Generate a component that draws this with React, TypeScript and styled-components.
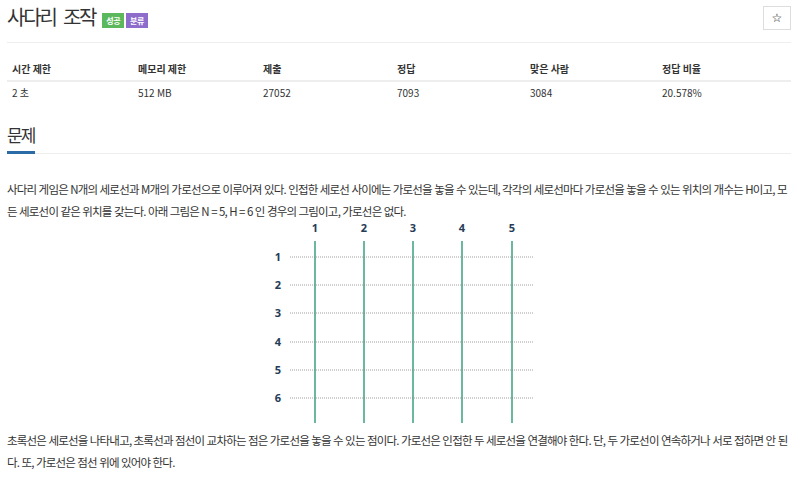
import React from 'react';
import styled, { createGlobalStyle } from 'styled-components';

const GlobalStyle = createGlobalStyle`
  body {
    margin: 0;
    background: #fff;
    color: #333;
    font-family: "Noto Sans CJK KR", "Noto Sans", sans-serif;
  }
`;

const Page = styled.div`
  width: 784px;
  padding: 0 9px 0 7px;
`;

const Header = styled.div`
  display: flex;
  align-items: center;
  justify-content: space-between;
  height: 42px;
  border-bottom: 1px solid #eee;
`;

const TitleRow = styled.div`
  display: flex;
  align-items: center;
  padding-bottom: 6px;
`;

const Title = styled.h1`
  margin: 0 7px 0 0;
  font-size: 20px;
  font-weight: 400;
  letter-spacing: -2.2px;
  word-spacing: 5px;
  line-height: 24px;
  color: #333;
  padding-bottom: 3px;
`;

const Badge = styled.span<{ $color: string }>`
  display: inline-block;
  background: ${({ $color }) => $color};
  color: #fff;
  font-size: 8px;
  font-weight: 700;
  letter-spacing: -0.5px;
  padding: 2px 4px;
  line-height: 11px;
  margin: 4px 2px 0 0;
`;

const StarButton = styled.button`
  width: 28px;
  height: 24px;
  margin-bottom: 7px;
  border: 1px solid #ddd;
  background: #fff;
  font-family: "DejaVu Sans", sans-serif;
  font-size: 12px;
  color: #111;
  padding: 0;
  display: flex;
  align-items: center;
  justify-content: center;
`;

const Table = styled.table`
  width: 100%;
  border-collapse: collapse;
  margin-top: 14px;
  font-size: 10px;
  table-layout: fixed;
`;

const Th = styled.th<{ $w: number }>`
  width: ${({ $w }) => $w - 10}px;
  text-align: left;
  font-weight: 700;
  padding: 5px 5px 5px;
  border-bottom: 2px solid #eee;
  line-height: 13px;
`;

const Td = styled.td`
  padding: 4px 5px;
  line-height: 13px;
`;

const SectionHead = styled.div`
  margin-top: 20px;
  border-bottom: 1px solid #eee;
`;

const SectionTitle = styled.h2`
  display: inline-block;
  margin: 0 0 -1px;
  font-size: 17px;
  font-weight: 400;
  letter-spacing: -2px;
  line-height: 24px;
  padding-bottom: 4px;
  border-bottom: 3px solid #2c6ca6;
  padding-right: 1px;
`;

const Paragraph = styled.p`
  margin: 0;
  font-size: 11.5px;
  line-height: 22px;
  color: #333;
  letter-spacing: -0.8px;
  word-spacing: 0.5px;
`;

const Body = styled.div`
  padding-top: 24px;
`;

const Figure = styled.div`
  display: flex;
  justify-content: center;
  margin-top: -6px;
  padding: 0 0 3px;
`;

const cols = [315, 364, 413, 462, 512];
const rows = [257, 285, 313, 342, 370, 398];

const Ladder = () => (
  <svg width="280" height="210" viewBox="259 216 280 210">
    {cols.map((x, i) => (
      <g key={x}>
        <text x={x} y={232} textAnchor="middle" fontSize="11" fontWeight="700" fill="#253b57" fontFamily="Noto Sans, sans-serif">
          {i + 1}
        </text>
        <line x1={x} y1={241} x2={x} y2={423} stroke="#3aa07c" strokeWidth="1.5" />
      </g>
    ))}
    {rows.map((y, i) => (
      <g key={y}>
        <text x={278} y={y + 4} textAnchor="middle" fontSize="11" fontWeight="700" fill="#253b57" fontFamily="Noto Sans, sans-serif">
          {i + 1}
        </text>
        <line x1={290} y1={y} x2={533} y2={y} stroke="#888" strokeWidth="0.8" strokeDasharray="1 1" />
      </g>
    ))}
  </svg>
);

const info = [
  ['시간 제한', '2 초', 126],
  ['메모리 제한', '512 MB', 125],
  ['제출', '27052', 134],
  ['정답', '7093', 133],
  ['맞은 사람', '3084', 132],
  ['정답 비율', '20.578%', 134],
] as const;

export default function App() {
  return (
    <Page>
      <GlobalStyle />
      <Header>
        <TitleRow>
          <Title>사다리 조작</Title>
          <Badge $color="#5cb85c">성공</Badge>
          <Badge $color="#8e6ccc">분류</Badge>
        </TitleRow>
        <StarButton>☆</StarButton>
      </Header>
      <Table>
        <thead>
          <tr>
            {info.map(([h, , w]) => (
              <Th key={h} $w={w}>{h}</Th>
            ))}
          </tr>
        </thead>
        <tbody>
          <tr>
            {info.map(([h, v]) => (
              <Td key={h}>{v}</Td>
            ))}
          </tr>
        </tbody>
      </Table>
      <SectionHead>
        <SectionTitle>문제</SectionTitle>
      </SectionHead>
      <Body>
        <Paragraph>
          사다리 게임은 N개의 세로선과 M개의 가로선으로 이루어져 있다. 인접한 세로선 사이에는 가로선을 놓을 수 있는데, 각각의 세로선마다 가로선을 놓을 수 있는 위치의 개수는 H이고, 모든 세로선이 같은 위치를 갖는다. 아래 그림은 N = 5, H = 6 인 경우의 그림이고, 가로선은 없다.
        </Paragraph>
        <Figure>
          <Ladder />
        </Figure>
        <Paragraph>
          초록선은 세로선을 나타내고, 초록선과 점선이 교차하는 점은 가로선을 놓을 수 있는 점이다. 가로선은 인접한 두 세로선을 연결해야 한다. 단, 두 가로선이 연속하거나 서로 접하면 안 된다. 또, 가로선은 점선 위에 있어야 한다.
        </Paragraph>
      </Body>
    </Page>
  );
}
